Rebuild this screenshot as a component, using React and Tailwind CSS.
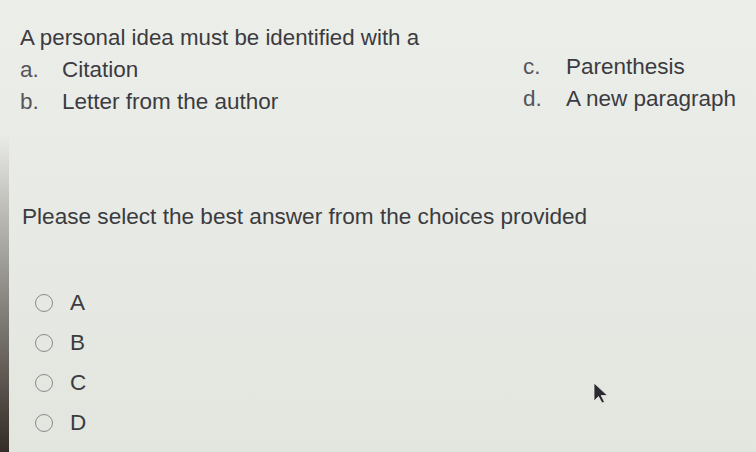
import { useState } from "react";

const choices = [
  ["a.", "Citation", "c.", "Parenthesis"],
  ["b.", "Letter from the author", "d.", "A new paragraph"],
];

const answers = ["A", "B", "C", "D"];

const App = () => {
  const [picked, setPicked] = useState(null);
  return (
    <div
      className="relative w-[756px] h-[452px] overflow-hidden bg-linear-to-b from-[#eceeea] to-[#e3e5df] text-[#3b3b40]"
      style={{ fontFamily: '"Liberation Sans", Arial, sans-serif' }}
    >
      {/* dark monitor edge on the left */}
      <div className="absolute left-0 top-0 h-full w-[9px] bg-linear-to-b from-transparent from-30% to-[#342c26]" />

      <div className="pl-[20px] pt-[26px]">
        <p className="text-[22.3px] leading-[24px]">
          A personal idea must be identified with a
        </p>
        <div className="mt-[4px] flex flex-col">
          {choices.map(([l1, t1, l2, t2]) => (
            <div key={l1} className="flex h-[32px] items-center text-[22.5px]">
              <div className="flex w-[503px]">
                <span className="w-[42px] text-[#55555a]">{l1}</span>
                <span>{t1}</span>
              </div>
              <div className="flex -translate-y-[3px]">
                <span className="w-[43px] text-[#55555a]">{l2}</span>
                <span>{t2}</span>
              </div>
            </div>
          ))}
        </div>

        <p className="mt-[87px] pl-[2px] text-[22.6px] leading-[24px]">
          Please select the best answer from the choices provided
        </p>

        <div className="mt-[54px] flex flex-col pl-[15px]">
          {answers.map((a) => (
            <label
              key={a}
              className="flex h-[40px] cursor-pointer items-center gap-[17px] text-[22.5px]"
              onClick={() => setPicked(a)}
            >
              <span className="flex h-[18px] w-[18px] items-center justify-center rounded-full border-[1.5px] border-[#8a8b8c]">
                {picked === a && (
                  <span className="h-[9px] w-[9px] rounded-full bg-[#55575a]" />
                )}
              </span>
              <span>{a}</span>
            </label>
          ))}
        </div>
      </div>

      {/* mouse pointer */}
      <svg
        className="absolute left-[592px] top-[382px]"
        width="18"
        height="24"
        viewBox="0 0 18 24"
      >
        <path
          d="M2 1 L2 19 L6.5 14.5 L10 21 L12.5 20 L9.2 13.5 L15.5 13.5 Z"
          fill="#2a2a30"
          stroke="#e8eae5"
          strokeWidth="0.8"
        />
      </svg>
    </div>
  );
};

export default App;
